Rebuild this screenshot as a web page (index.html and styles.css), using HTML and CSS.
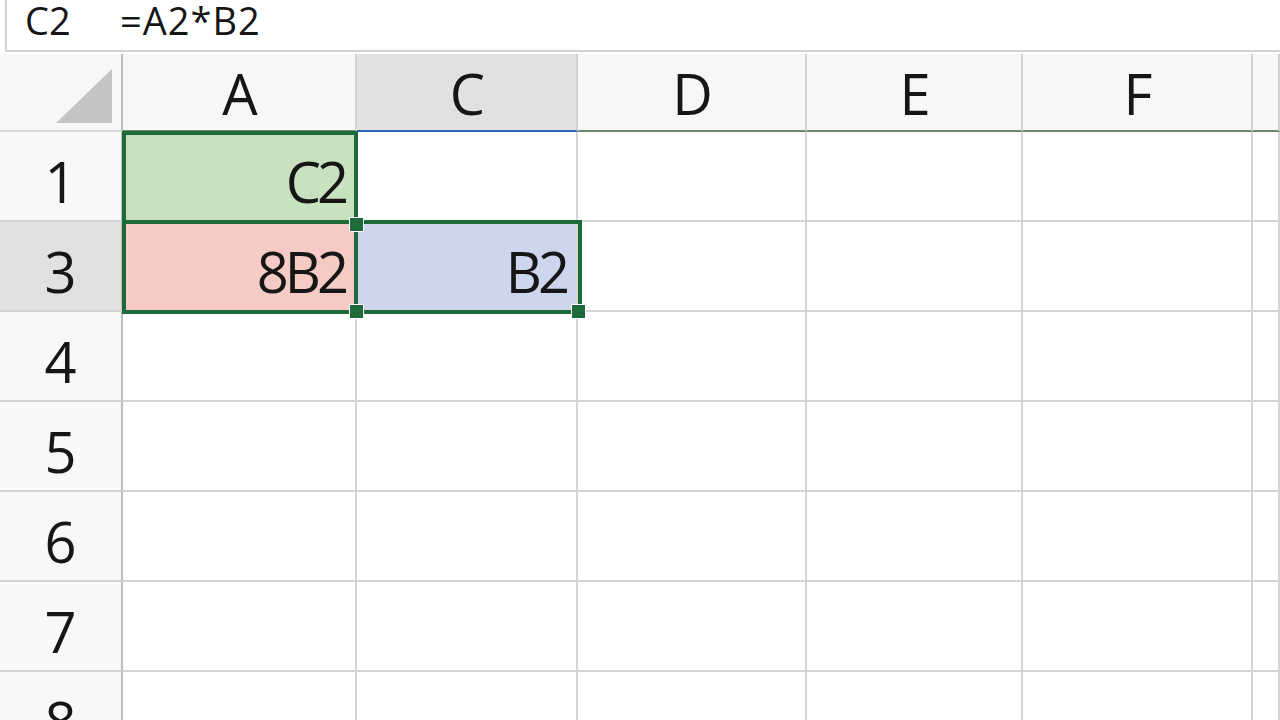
FILE: index.html
```html
<!DOCTYPE html>
<html>
<head>
<meta charset="utf-8">
<link rel="stylesheet" href="styles.css">
</head>
<body>
<div class="formula-bar">
  <div class="name-box">C2</div>
  <div class="formula">=A2*B2</div>
</div>
<div class="sheet">
  <div class="corner"><svg class="tri" width="56" height="54" viewBox="0 0 56 54"><polygon points="56,0 56,54 0,54" fill="#c4c4c4"/></svg></div>
  <div class="colhead">A</div>
  <div class="colhead active">C</div>
  <div class="colhead">D</div>
  <div class="colhead">E</div>
  <div class="colhead">F</div>
  <div class="colhead"></div>

  <div class="rowhead">1</div>
  <div class="cell fill-green">C2</div>
  <div class="cell"></div><div class="cell"></div><div class="cell"></div><div class="cell"></div><div class="cell"></div>

  <div class="rowhead active">3</div>
  <div class="cell fill-pink">8B2</div>
  <div class="cell fill-blue">B2</div>
  <div class="cell"></div><div class="cell"></div><div class="cell"></div><div class="cell"></div>

  <div class="rowhead">4</div>
  <div class="cell"></div><div class="cell"></div><div class="cell"></div><div class="cell"></div><div class="cell"></div><div class="cell"></div>
  <div class="rowhead">5</div>
  <div class="cell"></div><div class="cell"></div><div class="cell"></div><div class="cell"></div><div class="cell"></div><div class="cell"></div>
  <div class="rowhead">6</div>
  <div class="cell"></div><div class="cell"></div><div class="cell"></div><div class="cell"></div><div class="cell"></div><div class="cell"></div>
  <div class="rowhead">7</div>
  <div class="cell"></div><div class="cell"></div><div class="cell"></div><div class="cell"></div><div class="cell"></div><div class="cell"></div>
  <div class="rowhead">8</div>
  <div class="cell"></div><div class="cell"></div><div class="cell"></div><div class="cell"></div><div class="cell"></div><div class="cell"></div>

  <div class="sel sel-a1"></div>
  <div class="sel sel-a3"></div>
  <div class="sel sel-c3"></div>
  <div class="handle h1"></div>
  <div class="handle h2"></div>
  <div class="handle h3"></div>
</div>
</body>
</html>
```

FILE: styles.css
```css
html, body {
  margin: 0;
  padding: 0;
  background: #ffffff;
  overflow: hidden;
  width: 1280px;
  height: 720px;
}

body {
  font-family: "Open Sans", "Noto Sans", sans-serif;
  font-weight: 500;
  color: #161616;
}

.formula-bar {
  height: 50px;
  margin-left: 5px;
  border-left: 2px solid #d2d2d2;
  border-bottom: 2px solid #d2d2d2;
  display: flex;
  align-items: flex-start;
  font-size: 38px;
  line-height: 40px;
  background: #ffffff;
}

.name-box {
  width: 95px;
  padding-left: 18px;
}

.formula {
  letter-spacing: 1px;
}

.sheet {
  position: relative;
  margin-top: 2px;
  display: grid;
  grid-template-columns: 123px 234px 221px 229px 216px 230px 1fr;
  grid-template-rows: 78px repeat(7, 90px);
  font-size: 56px;
}

.corner {
  background: #f7f7f7;
  border-right: 2px solid #bdbdbd;
  border-bottom: 2px solid #d6d6d6;
  display: flex;
  align-items: flex-end;
  justify-content: flex-end;
  padding: 0 9px 7px 0;
}

.colhead {
  background: #f7f7f7;
  border-right: 2px solid #d2d2d2;
  border-bottom: 2px solid #6d8a6d;
  display: flex;
  align-items: center;
  justify-content: center;
  padding-top: 2px;
  letter-spacing: -2px;
}

.colhead.active {
  background: #e1e1e1;
  border-bottom-color: #2f63b8;
}

.rowhead {
  background: #f8f8f8;
  border-right: 2px solid #bdbdbd;
  border-bottom: 2px solid #d4d4d4;
  display: flex;
  align-items: flex-end;
  justify-content: center;
  padding-bottom: 11px;
  line-height: 1;
}

.rowhead.active {
  background: #e1e1e1;
}

.cell {
  border-right: 2px solid #d5d5d5;
  border-bottom: 2px solid #d5d5d5;
  display: flex;
  align-items: flex-end;
  justify-content: flex-end;
  padding: 0 10px 11px 0;
  line-height: 1;
  letter-spacing: -4px;
}

.fill-green { background: #c8e2c0; }
.fill-pink { background: #f6cbc6; }
.fill-blue { background: #ccd6ec; }

.sel {
  position: absolute;
  border: 4px solid #1e6a3b;
  box-sizing: border-box;
}

.sel-a1 { left: 122px; top: 77px; width: 236px; height: 93px; }
.sel-a3 { left: 122px; top: 166px; width: 236px; height: 94px; }
.sel-c3 { left: 354px; top: 166px; width: 228px; height: 94px; }

.handle {
  position: absolute;
  width: 13px;
  height: 13px;
  background: #1e6a3b;
  outline: 1px solid #ffffff;
}

.h1 { left: 350px; top: 164px; }
.h2 { left: 350px; top: 251px; }
.h3 { left: 572px; top: 251px; }
```
